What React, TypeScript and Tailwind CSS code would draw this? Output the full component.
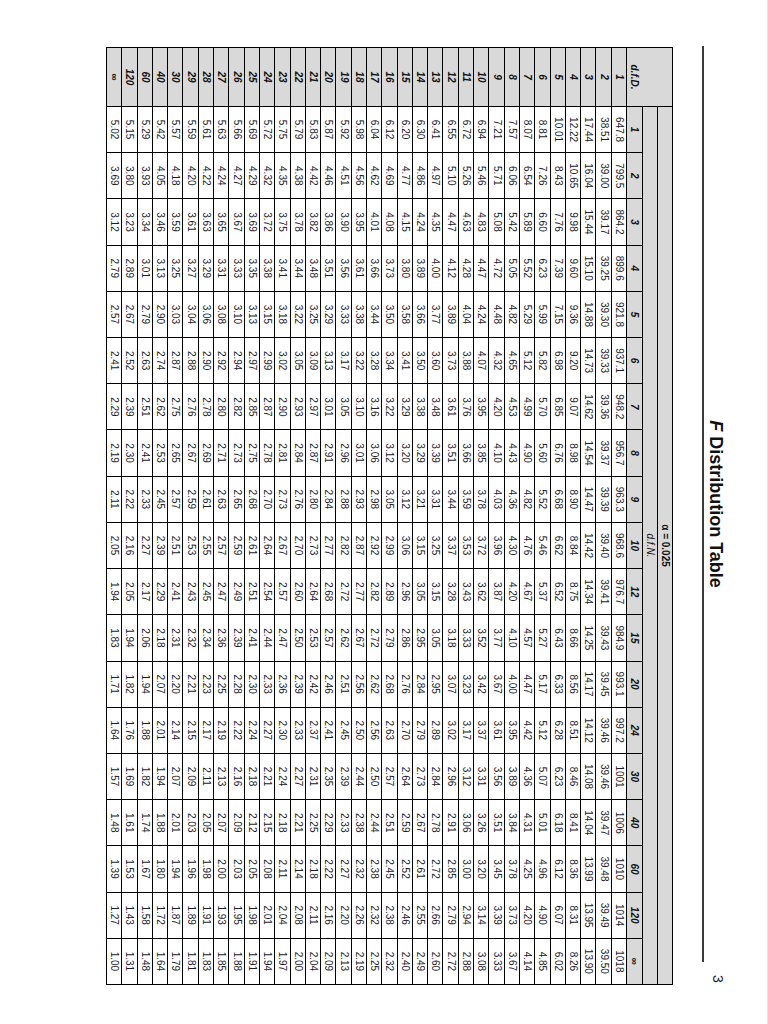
const COLS = ['1', '2', '3', '4', '5', '6', '7', '8', '9', '10', '12', '15', '20', '24', '30', '40', '60', '120', '∞'];

// d.f.D. label, then one value per d.f.N. column
const ROWS: [string, string][] = [
  ['1', '647.8 799.5 864.2 899.6 921.8 937.1 948.2 956.7 963.3 968.6 976.7 984.9 993.1 997.2 1001 1006 1010 1014 1018'],
  ['2', '38.51 39.00 39.17 39.25 39.30 39.33 39.36 39.37 39.39 39.40 39.41 39.43 39.45 39.46 39.46 39.47 39.48 39.49 39.50'],
  ['3', '17.44 16.04 15.44 15.10 14.88 14.73 14.62 14.54 14.47 14.42 14.34 14.25 14.17 14.12 14.08 14.04 13.99 13.95 13.90'],
  ['4', '12.22 10.65 9.98 9.60 9.36 9.20 9.07 8.98 8.90 8.84 8.75 8.66 8.56 8.51 8.46 8.41 8.36 8.31 8.26'],
  ['5', '10.01 8.43 7.76 7.39 7.15 6.98 6.85 6.76 6.68 6.62 6.52 6.43 6.33 6.28 6.23 6.18 6.12 6.07 6.02'],
  ['6', '8.81 7.26 6.60 6.23 5.99 5.82 5.70 5.60 5.52 5.46 5.37 5.27 5.17 5.12 5.07 5.01 4.96 4.90 4.85'],
  ['7', '8.07 6.54 5.89 5.52 5.29 5.12 4.99 4.90 4.82 4.76 4.67 4.57 4.47 4.42 4.36 4.31 4.25 4.20 4.14'],
  ['8', '7.57 6.06 5.42 5.05 4.82 4.65 4.53 4.43 4.36 4.30 4.20 4.10 4.00 3.95 3.89 3.84 3.78 3.73 3.67'],
  ['9', '7.21 5.71 5.08 4.72 4.48 4.32 4.20 4.10 4.03 3.96 3.87 3.77 3.67 3.61 3.56 3.51 3.45 3.39 3.33'],
  ['10', '6.94 5.46 4.83 4.47 4.24 4.07 3.95 3.85 3.78 3.72 3.62 3.52 3.42 3.37 3.31 3.26 3.20 3.14 3.08'],
  ['11', '6.72 5.26 4.63 4.28 4.04 3.88 3.76 3.66 3.59 3.53 3.43 3.33 3.23 3.17 3.12 3.06 3.00 2.94 2.88'],
  ['12', '6.55 5.10 4.47 4.12 3.89 3.73 3.61 3.51 3.44 3.37 3.28 3.18 3.07 3.02 2.96 2.91 2.85 2.79 2.72'],
  ['13', '6.41 4.97 4.35 4.00 3.77 3.60 3.48 3.39 3.31 3.25 3.15 3.05 2.95 2.89 2.84 2.78 2.72 2.66 2.60'],
  ['14', '6.30 4.86 4.24 3.89 3.66 3.50 3.38 3.29 3.21 3.15 3.05 2.95 2.84 2.79 2.73 2.67 2.61 2.55 2.49'],
  ['15', '6.20 4.77 4.15 3.80 3.58 3.41 3.29 3.20 3.12 3.06 2.96 2.86 2.76 2.70 2.64 2.59 2.52 2.46 2.40'],
  ['16', '6.12 4.69 4.08 3.73 3.50 3.34 3.22 3.12 3.05 2.99 2.89 2.79 2.68 2.63 2.57 2.51 2.45 2.38 2.32'],
  ['17', '6.04 4.62 4.01 3.66 3.44 3.28 3.16 3.06 2.98 2.92 2.82 2.72 2.62 2.56 2.50 2.44 2.38 2.32 2.25'],
  ['18', '5.98 4.56 3.95 3.61 3.38 3.22 3.10 3.01 2.93 2.87 2.77 2.67 2.56 2.50 2.44 2.38 2.32 2.26 2.19'],
  ['19', '5.92 4.51 3.90 3.56 3.33 3.17 3.05 2.96 2.88 2.82 2.72 2.62 2.51 2.45 2.39 2.33 2.27 2.20 2.13'],
  ['20', '5.87 4.46 3.86 3.51 3.29 3.13 3.01 2.91 2.84 2.77 2.68 2.57 2.46 2.41 2.35 2.29 2.22 2.16 2.09'],
  ['21', '5.83 4.42 3.82 3.48 3.25 3.09 2.97 2.87 2.80 2.73 2.64 2.53 2.42 2.37 2.31 2.25 2.18 2.11 2.04'],
  ['22', '5.79 4.38 3.78 3.44 3.22 3.05 2.93 2.84 2.76 2.70 2.60 2.50 2.39 2.33 2.27 2.21 2.14 2.08 2.00'],
  ['23', '5.75 4.35 3.75 3.41 3.18 3.02 2.90 2.81 2.73 2.67 2.57 2.47 2.36 2.30 2.24 2.18 2.11 2.04 1.97'],
  ['24', '5.72 4.32 3.72 3.38 3.15 2.99 2.87 2.78 2.70 2.64 2.54 2.44 2.33 2.27 2.21 2.15 2.08 2.01 1.94'],
  ['25', '5.69 4.29 3.69 3.35 3.13 2.97 2.85 2.75 2.68 2.61 2.51 2.41 2.30 2.24 2.18 2.12 2.05 1.98 1.91'],
  ['26', '5.66 4.27 3.67 3.33 3.10 2.94 2.82 2.73 2.65 2.59 2.49 2.39 2.28 2.22 2.16 2.09 2.03 1.95 1.88'],
  ['27', '5.63 4.24 3.65 3.31 3.08 2.92 2.80 2.71 2.63 2.57 2.47 2.36 2.25 2.19 2.13 2.07 2.00 1.93 1.85'],
  ['28', '5.61 4.22 3.63 3.29 3.06 2.90 2.78 2.69 2.61 2.55 2.45 2.34 2.23 2.17 2.11 2.05 1.98 1.91 1.83'],
  ['29', '5.59 4.20 3.61 3.27 3.04 2.88 2.76 2.67 2.59 2.53 2.43 2.32 2.21 2.15 2.09 2.03 1.96 1.89 1.81'],
  ['30', '5.57 4.18 3.59 3.25 3.03 2.87 2.75 2.65 2.57 2.51 2.41 2.31 2.20 2.14 2.07 2.01 1.94 1.87 1.79'],
  ['40', '5.42 4.05 3.46 3.13 2.90 2.74 2.62 2.53 2.45 2.39 2.29 2.18 2.07 2.01 1.94 1.88 1.80 1.72 1.64'],
  ['60', '5.29 3.93 3.34 3.01 2.79 2.63 2.51 2.41 2.33 2.27 2.17 2.06 1.94 1.88 1.82 1.74 1.67 1.58 1.48'],
  ['120', '5.15 3.80 3.23 2.89 2.67 2.52 2.39 2.30 2.22 2.16 2.05 1.94 1.82 1.76 1.69 1.61 1.53 1.43 1.31'],
  ['∞', '5.02 3.69 3.12 2.79 2.57 2.41 2.29 2.19 2.11 2.05 1.94 1.83 1.71 1.64 1.57 1.48 1.39 1.27 1.00'],
];

const cell = 'flex items-center justify-center border-r border-b border-black leading-none';
const head = `${cell} bg-[#d9d9d9] text-[#111]`;

export default function App() {
  return (
    <div className="w-[768px] h-[1024px] overflow-hidden bg-white font-['Liberation_Sans',Arial,sans-serif]">
      {/* the scanned page lies on its side: lay it out landscape, then turn it */}
      <div className="w-[1024px] h-[768px] origin-top-left translate-x-[768px] rotate-90 bg-white border-t border-[#e4e4e4] pl-[46px] pt-[41px]">
        {/* Page header */}
        <div className="flex items-start">
          <div className="w-[916px] flex justify-center border-b-2 border-[#3a3a3a] pb-[2px]">
            <h1 className="text-[18px] leading-[20px] font-bold text-[#111]">
              <i>F</i> Distribution Table
            </h1>
          </div>
          <span className="ml-[13px] text-[14px] leading-[16px] text-[#1a1a3a]">3</span>
        </div>

        {/* Table */}
        <div
          className="mt-[29px] ml-[1px] w-[938px] h-[567px] grid grid-cols-[59px_repeat(19,minmax(0,1fr))]
                     grid-rows-[15px_15px_16px_repeat(34,minmax(0,1fr))] border-l border-t border-black"
        >
          <div className={`${head} row-span-3 !items-end pb-[2px] text-[10px] font-bold italic`}>d.f.D.</div>
          <div className={`${head} col-span-19 text-[10px] font-bold`}>α = 0.025</div>
          <div className={`${head} col-span-19 text-[10px] italic`}>d.f.N.</div>
          {COLS.map((c) => (
            <div key={c} className={`${head} text-[10px] font-bold italic`}>
              {c}
            </div>
          ))}

          {ROWS.map(([label, values]) => (
            <Row key={label} label={label} values={values.split(' ')} />
          ))}
        </div>
      </div>
    </div>
  );
}

function Row({ label, values }: { label: string; values: string[] }) {
  return (
    <>
      <div className={`${head} text-[10px] font-bold italic`}>{label}</div>
      {values.map((v, i) => (
        <div key={i} className={`${cell} bg-white text-[10px] text-[#1c1c2a]`}>
          {v}
        </div>
      ))}
    </>
  );
}
